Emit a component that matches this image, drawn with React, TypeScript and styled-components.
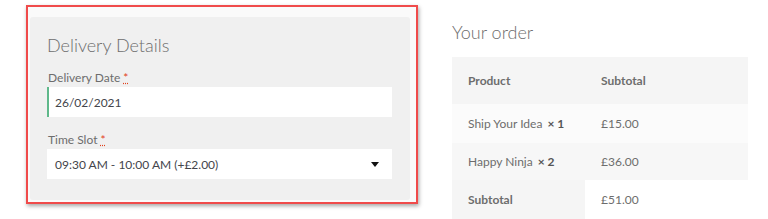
import React from 'react';
import styled, { createGlobalStyle } from 'styled-components';

const GlobalStyle = createGlobalStyle`
  body {
    margin: 0;
    background: #ffffff;
    font-family: Lato, 'Noto Sans', sans-serif;
    color: #6d6d6d;
  }
`;

const Page = styled.div`
  display: flex;
  align-items: flex-start;
  gap: 34px;
  padding: 5px 0 0 26px;
`;

const Highlight = styled.div`
  width: 380px;
  border: 2px solid #f04b4b;
  background: #fafafa;
  box-shadow: 1px 2px 4px rgba(0, 0, 0, 0.35);
  padding: 10px 6px 2px 2px;
`;

const Panel = styled.div`
  background: #f0f0f0;
  border-radius: 3px;
  padding: 16px 18px 21px 17px;
`;

const Heading = styled.h3<{ $gap: number }>`
  margin: 0 0 ${p => p.$gap}px 0;
  font-size: 18px;
  line-height: 24px;
  font-weight: 300;
  color: #6d6d6d;
`;

const Field = styled.div<{ $top: number }>`
  margin-top: ${p => p.$top}px;
`;

const Label = styled.label`
  display: block;
  font-size: 12px;
  line-height: 16px;
  color: #6d6d6d;
  margin-bottom: 1px;
  padding-left: 1px;
`;

const Required = styled.abbr`
  color: #e2401c;
  margin-left: 3px;
  text-decoration: underline dotted;
`;

const Input = styled.div<{ $accent?: boolean }>`
  height: 30px;
  box-sizing: border-box;
  background: #ffffff;
  border-left: 2px solid ${p => (p.$accent ? '#5fb88a' : '#ffffff')};
  display: flex;
  align-items: center;
  justify-content: space-between;
  padding: 0 13px 0 6px;
  font-size: 12px;
  color: #43454b;
`;

const Caret = styled.span`
  width: 0;
  height: 0;
  border-left: 4px solid transparent;
  border-right: 4px solid transparent;
  border-top: 5px solid #111111;
`;

const OrderColumn = styled.div`
  width: 296px;
  padding-top: 15px;
`;

const Table = styled.table`
  width: 100%;
  border-collapse: collapse;
  font-size: 12px;
  color: #6d6d6d;
`;

const Cell = styled.td<{ $h: number; $bg: string; $w?: number }>`
  height: ${p => p.$h}px;
  background: ${p => p.$bg};
  padding: 0 16px;
  text-align: left;
  width: ${p => (p.$w ? `${p.$w - 32}px` : 'auto')};
`;

const HeadCell = styled(Cell).attrs({ as: 'th' })`
  font-weight: 700;
`;

const Qty = styled.strong`
  margin-left: 5px;
  color: #555555;
`;

const items = [
  { name: 'Ship Your Idea', qty: 1, total: '£15.00', bg: '#fbfbfb', h: 39 },
  { name: 'Happy Ninja', qty: 2, total: '£36.00', bg: '#f7f7f7', h: 37 },
];

export default function App() {
  return (
    <>
      <GlobalStyle />
      <Page>
        <Highlight>
          <Panel>
            <Heading $gap={13}>Delivery Details</Heading>
            <Field $top={0}>
              <Label>
                Delivery Date<Required title="required">*</Required>
              </Label>
              <Input $accent>26/02/2021</Input>
            </Field>
            <Field $top={15}>
              <Label>
                Time Slot<Required title="required">*</Required>
              </Label>
              <Input>
                <span>09:30 AM - 10:00 AM (+£2.00)</span>
                <Caret />
              </Input>
            </Field>
          </Panel>
        </Highlight>
        <OrderColumn>
          <Heading $gap={13}>Your order</Heading>
          <Table>
            <thead>
              <tr>
                <HeadCell $h={47} $bg="#f5f5f5" $w={133}>Product</HeadCell>
                <HeadCell $h={47} $bg="#f5f5f5">Subtotal</HeadCell>
              </tr>
            </thead>
            <tbody>
              {items.map(item => (
                <tr key={item.name}>
                  <Cell $h={item.h} $bg={item.bg}>
                    {item.name}
                    <Qty>× {item.qty}</Qty>
                  </Cell>
                  <Cell $h={item.h} $bg={item.bg}>{item.total}</Cell>
                </tr>
              ))}
              <tr>
                <HeadCell $h={39} $bg="#f5f5f5">Subtotal</HeadCell>
                <Cell $h={39} $bg="#ffffff">£51.00</Cell>
              </tr>
            </tbody>
          </Table>
        </OrderColumn>
      </Page>
    </>
  );
}
